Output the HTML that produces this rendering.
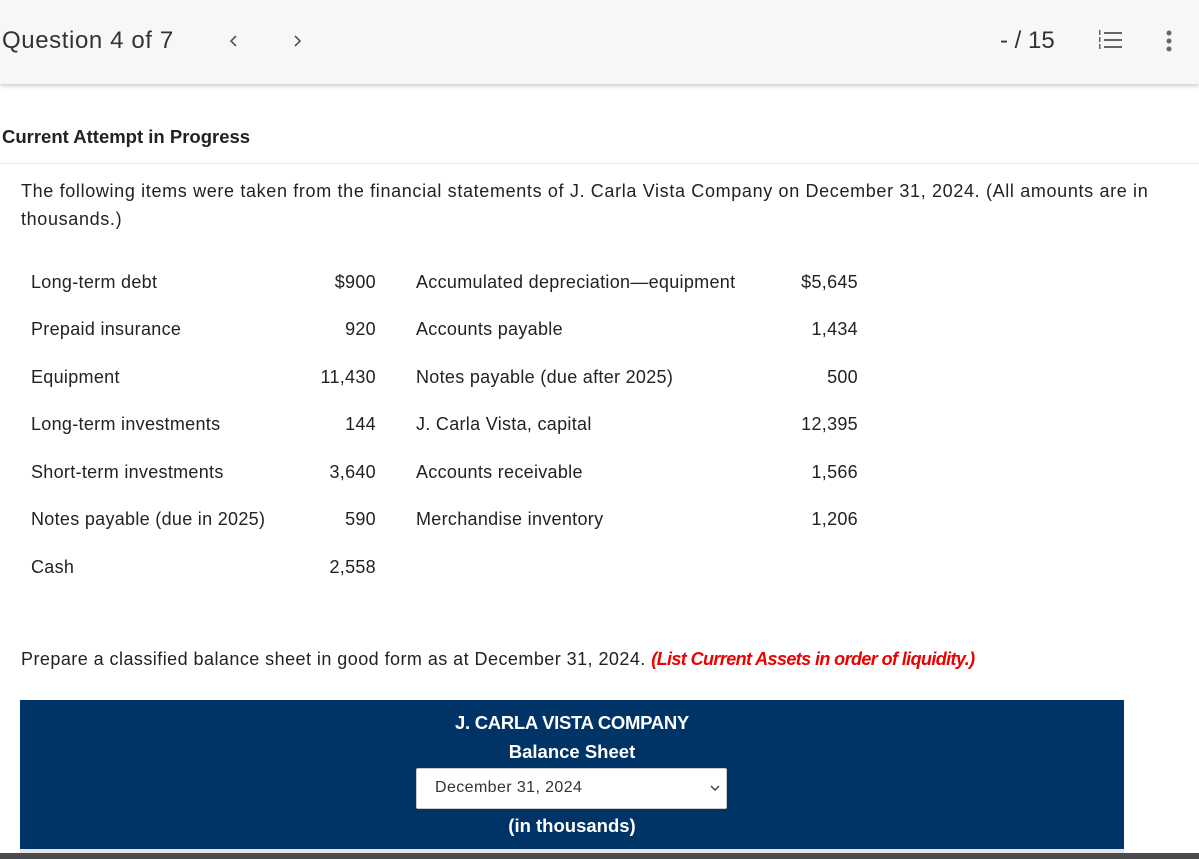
<!DOCTYPE html>
<html><head><meta charset="utf-8"><style>
body{margin:0;width:1199px;height:859px;overflow:hidden;background:#fff;font-family:"Liberation Sans",sans-serif;color:#222;position:relative}
.a{position:absolute;white-space:nowrap}
.hdr{position:absolute;left:0;top:0;width:1199px;height:84px;background:#f7f7f7;box-shadow:0 2px 4px rgba(0,0,0,.2)}
.t{font-size:18px;letter-spacing:0.3px}
.r{text-align:right}
</style></head><body>
<div class="hdr"></div>
<div class="a" style="left:2px;top:27px;font-size:24px;color:#333;letter-spacing:0.6px">Question 4 of 7</div>
<svg class="a" style="left:228px;top:33px" width="12" height="16"><path d="M8 3 L3 8 L8 13" stroke="#555" stroke-width="1.6" fill="none"/></svg>
<svg class="a" style="left:292px;top:33px" width="12" height="16"><path d="M3 3 L8 8 L3 13" stroke="#555" stroke-width="1.6" fill="none"/></svg>
<div class="a" style="left:1000px;top:27px;font-size:24px;color:#333">- / 15</div>
<svg class="a" style="left:1098px;top:29px" width="28" height="22"><g fill="#666"><rect x="6" y="3" width="18" height="2"/><rect x="6" y="10" width="18" height="2"/><rect x="6" y="17" width="18" height="2"/><rect x="1" y="1" width="1.5" height="5"/><rect x="1" y="8" width="1.5" height="5"/><rect x="1" y="15" width="1.5" height="5"/></g></svg>
<svg class="a" style="left:1165px;top:29px" width="8" height="24"><g fill="#666"><circle cx="4" cy="4" r="2.5"/><circle cx="4" cy="12" r="2.5"/><circle cx="4" cy="20" r="2.5"/></g></svg>
<div class="a" style="left:2px;top:126px;font-size:18.5px;font-weight:bold;letter-spacing:0;color:#222">Current Attempt in Progress</div>
<div class="a" style="left:0;top:163px;width:1199px;height:1px;background:#e8e8e8"></div>
<div class="a t" style="left:21px;top:177px;line-height:28px;white-space:normal;width:1170px;letter-spacing:0.65px">The following items were taken from the financial statements of J. Carla Vista Company on December 31, 2024. (All amounts are in thousands.)</div>

<div class="a t" style="left:31px;top:272px">Long-term debt</div><div class="a t r" style="left:276px;width:100px;top:272px">$900</div>
<div class="a t" style="left:416px;top:272px">Accumulated depreciation—equipment</div><div class="a t r" style="left:758px;width:100px;top:272px">$5,645</div>
<div class="a t" style="left:31px;top:319px">Prepaid insurance</div><div class="a t r" style="left:276px;width:100px;top:319px">920</div>
<div class="a t" style="left:416px;top:319px">Accounts payable</div><div class="a t r" style="left:758px;width:100px;top:319px">1,434</div>
<div class="a t" style="left:31px;top:367px">Equipment</div><div class="a t r" style="left:276px;width:100px;top:367px">11,430</div>
<div class="a t" style="left:416px;top:367px">Notes payable (due after 2025)</div><div class="a t r" style="left:758px;width:100px;top:367px">500</div>
<div class="a t" style="left:31px;top:414px">Long-term investments</div><div class="a t r" style="left:276px;width:100px;top:414px">144</div>
<div class="a t" style="left:416px;top:414px">J. Carla Vista, capital</div><div class="a t r" style="left:758px;width:100px;top:414px">12,395</div>
<div class="a t" style="left:31px;top:462px">Short-term investments</div><div class="a t r" style="left:276px;width:100px;top:462px">3,640</div>
<div class="a t" style="left:416px;top:462px">Accounts receivable</div><div class="a t r" style="left:758px;width:100px;top:462px">1,566</div>
<div class="a t" style="left:31px;top:509px">Notes payable (due in 2025)</div><div class="a t r" style="left:276px;width:100px;top:509px">590</div>
<div class="a t" style="left:416px;top:509px">Merchandise inventory</div><div class="a t r" style="left:758px;width:100px;top:509px">1,206</div>
<div class="a t" style="left:31px;top:557px">Cash</div><div class="a t r" style="left:276px;width:100px;top:557px">2,558</div>

<div class="a t" style="left:21px;top:649px;letter-spacing:0.45px">Prepare a classified balance sheet in good form as at December 31, 2024. <b style="color:#e00;font-style:italic;letter-spacing:-0.6px">(List Current Assets in order of liquidity.)</b></div>

<div class="a" style="left:20px;top:700px;width:1104px;height:149px;background:#003366"></div>
<div class="a" style="left:20px;width:1104px;text-align:center;top:712px;color:#fff;font-weight:bold;font-size:18.5px;letter-spacing:-0.3px">J. CARLA VISTA COMPANY</div>
<div class="a" style="left:20px;width:1104px;text-align:center;top:741px;color:#fff;font-weight:bold;font-size:18.5px;letter-spacing:0">Balance Sheet</div>
<div class="a" style="left:416px;top:768px;width:311px;height:41px;background:#fff;border-radius:2px;border:1px solid #ccc;box-sizing:border-box"></div>
<div class="a" style="left:435px;top:779px;font-size:16px;color:#333;letter-spacing:0.4px">December 31, 2024</div>
<svg class="a" style="left:710px;top:784px" width="10" height="8"><path d="M1 2 L5 6 L9 2" stroke="#444" stroke-width="1.5" fill="none"/></svg>
<div class="a" style="left:20px;width:1104px;text-align:center;top:815px;color:#fff;font-weight:bold;font-size:18.5px;letter-spacing:0">(in thousands)</div>
<div class="a" style="left:20px;top:849px;width:1104px;height:4px;background:#e4e4e4"></div>
<div class="a" style="left:0;top:853px;width:1199px;height:6px;background:#4a4a4a"></div>
</body></html>
